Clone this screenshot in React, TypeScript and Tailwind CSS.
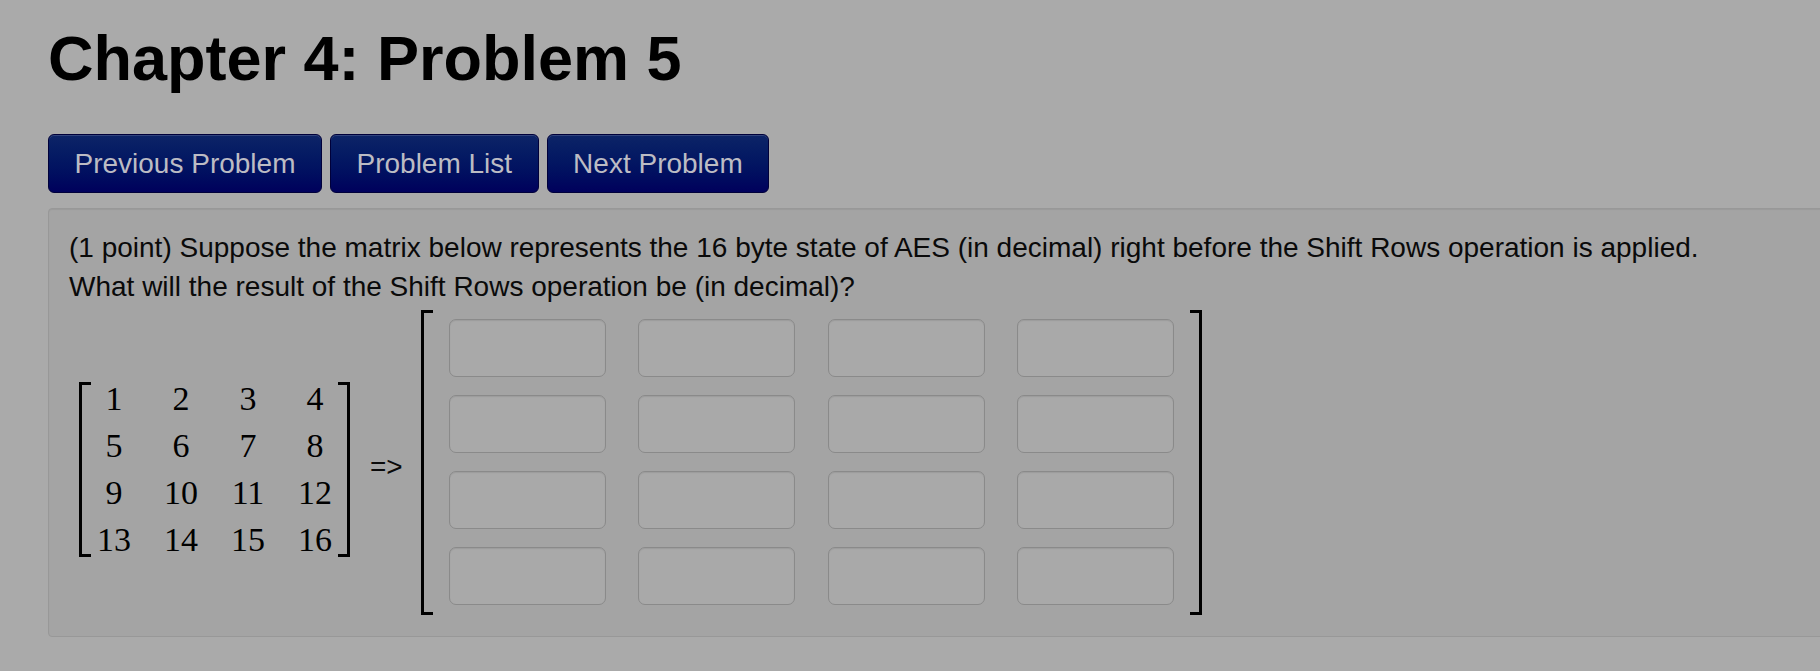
const state = [
  [1, 2, 3, 4],
  [5, 6, 7, 8],
  [9, 10, 11, 12],
  [13, 14, 15, 16],
];

function NavButton({ label }: { label: string }) {
  return (
    <button className="rounded-[6px] border border-[#00003a] bg-gradient-to-b from-[#0d2467] to-[#00005c] px-[25.5px] py-[9px] text-[28px] leading-[39px] text-[#bcbcc4] shadow-[inset_0_1px_0_rgba(255,255,255,0.15)]">
      {label}
    </button>
  );
}

function Bracket({ side, className }: { side: "left" | "right"; className: string }) {
  return (
    <div
      className={
        side === "left"
          ? `w-[12px] border-y-[3px] border-l-[3px] border-black ${className}`
          : `w-[12px] border-y-[3px] border-r-[3px] border-black ${className}`
      }
    />
  );
}

export default function App() {
  return (
    <div className="h-[671px] overflow-hidden bg-[#aaaaaa] pl-[48px] font-['Liberation_Sans',Arial,sans-serif] text-black">
      <h1 className="pt-[23px] text-[63px] font-bold leading-[70px]">Chapter 4: Problem 5</h1>

      <div className="mt-[41px] flex gap-[8px]">
        <NavButton label="Previous Problem" />
        <NavButton label="Problem List" />
        <NavButton label="Next Problem" />
      </div>

      <div className="mt-[15px] w-[1800px] rounded-[4px] border border-[#989898] bg-[#a4a4a4] px-[20px] pb-[21px] pt-[19px] shadow-[inset_0_1px_1px_rgba(0,0,0,0.06)]">
        <p className="text-[28px] leading-[39.2px] text-[#0a0a0a]">
          (1 point) Suppose the matrix below represents the 16 byte state of AES (in decimal) right before the Shift Rows operation is applied.
          <br />
          What will the result of the Shift Rows operation be (in decimal)?
        </p>

        <div className="mt-[4px] flex items-start">
          {/* given state */}
          <div className="ml-[10px] mt-[65px] flex h-[188px] items-center">
            <Bracket side="left" className="h-[175px]" />
            <div className="grid grid-cols-[repeat(4,46px)] gap-x-[21px] font-['Liberation_Serif','Times_New_Roman',serif] text-[34px] leading-[47px]">
              {state.flat().map((n) => (
                <span key={n} className="text-center">
                  {n}
                </span>
              ))}
            </div>
            <Bracket side="right" className="h-[175px]" />
          </div>

          <span className="ml-[20px] mt-[141px] text-[28px] leading-[32px] text-[#0a0a0a]">=&gt;</span>

          {/* answer grid */}
          <div className="ml-[18px] flex">
            <Bracket side="left" className="self-stretch" />
            <div className="grid grid-cols-[repeat(4,157px)] gap-x-[32.5px] gap-y-[18px] px-[16px] pb-[10px] pt-[9px]">
              {Array.from({ length: 16 }, (_, i) => (
                <input
                  key={i}
                  type="text"
                  aria-label={`answer ${i + 1}`}
                  className="h-[58px] rounded-[7px] border-[1.5px] border-[#8a8a8a] bg-[#a9a9a9] shadow-[inset_0_1px_1px_rgba(0,0,0,0.08)] outline-none"
                />
              ))}
            </div>
            <Bracket side="right" className="self-stretch" />
          </div>
        </div>
      </div>
    </div>
  );
}
